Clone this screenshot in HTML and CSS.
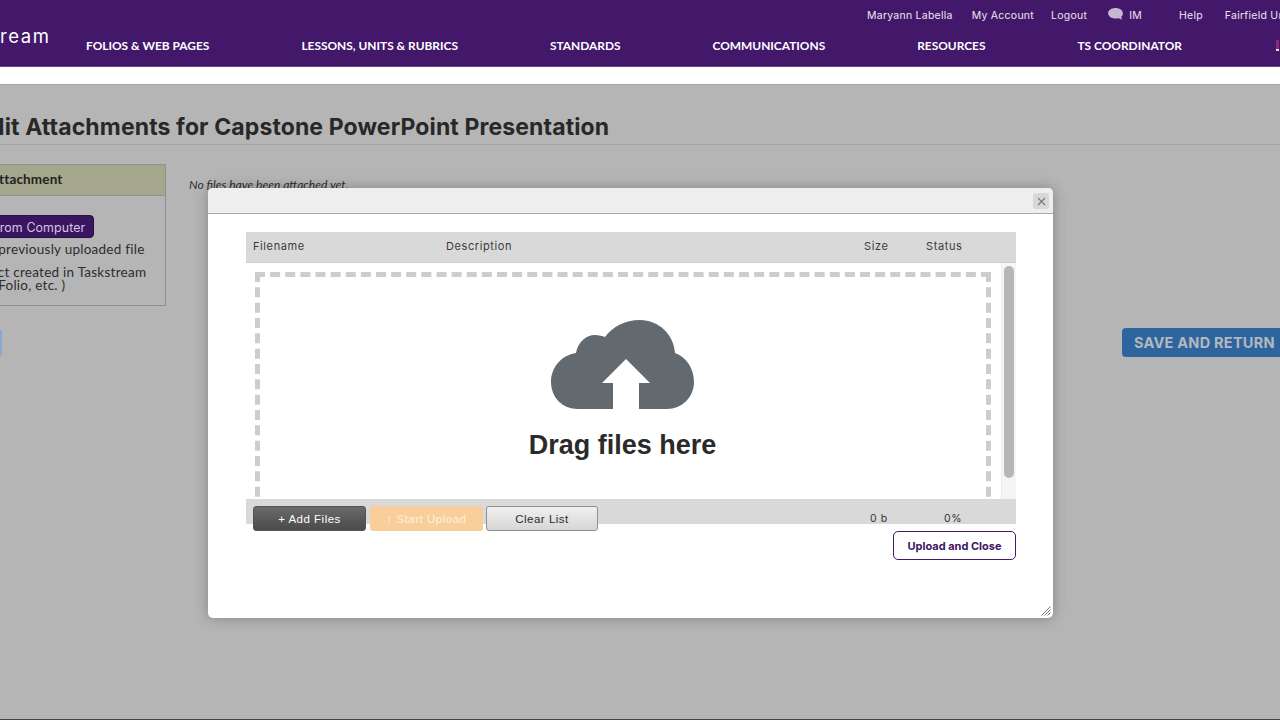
FILE: index.html
```html
<!DOCTYPE html>
<html lang="en">
<head>
<meta charset="utf-8">
<title>Edit Attachments</title>
<link rel="stylesheet" href="styles.css">
</head>
<body>
<header class="header">
  <div class="logo">ream</div>
  <div class="header-main">
    <div class="toplinks">
      <span>Maryann Labella</span>
      <span>My Account</span>
      <span class="logout">Logout</span>
      <span class="im">
        <svg class="im-icon" viewBox="0 0 16 13"><path d="M8 0C12.4 0 16 2.4 16 5.6C16 7.4 15.4 8.6 14.2 9.6L15 12.6L11.6 11C10.4 11.2 9 11.3 8 11.3C3.6 11.3 0 8.8 0 5.6C0 2.4 3.6 0 8 0Z"/></svg>
        IM
      </span>
      <span class="help">Help</span>
      <span class="school">Fairfield University</span>
    </div>
    <nav class="nav">
      <a>FOLIOS &amp; WEB PAGES</a>
      <a>LESSONS, UNITS &amp; RUBRICS</a>
      <a>STANDARDS</a>
      <a>COMMUNICATIONS</a>
      <a>RESOURCES</a>
      <a>TS COORDINATOR</a>
      <a class="nav-cut"></a>
    </nav>
  </div>
</header>
<div class="strip"></div>
<main class="page">
  <h1 class="title">Edit Attachments for Capstone PowerPoint Presentation</h1>
  <div class="columns">
    <section class="panel">
      <h2 class="panel-head">Add Attachment</h2>
      <div class="panel-body">
        <div class="pick">Upload from Computer</div>
        <p class="opt one">Select previously uploaded file</p>
        <p class="opt two"><span class="line-a">Select work product created in Taskstream</span><span class="line-b">(Web Folio, etc. )</span></p>
      </div>
    </section>
    <p class="none">No files have been attached yet.</p>
  </div>
  <div class="actions">
    <div class="sliver"></div>
    <div class="save">SAVE AND RETURN</div>
  </div>
</main>

<div class="modal">
  <div class="modal-bar"><div class="close">
    <svg viewBox="0 0 9 9" class="close-x"><path d="M1 1L8 8M8 1L1 8"/></svg>
  </div></div>
  <div class="modal-body">
    <div class="table">
      <div class="thead">
        <span class="c-name">Filename</span>
        <span class="c-desc">Description</span>
        <span class="c-size">Size</span>
        <span class="c-status">Status</span>
      </div>
      <div class="tbody">
        <div class="dropwrap">
          <div class="drop">
            <svg class="cloud" viewBox="0 0 144 90"><path fill-rule="evenodd" d="M27 89C11 89 0 77 0 62C0 47 11 35 25 33C27 22 35 15 44 15C48 15 51 16 54 17C61 7 74 0 89 0C108 0 123 15 124 33C135 37 143 48 143 62C143 77 131 89 116 89H88V63H99L75 39L51 63H62V89Z"/></svg>
            <div class="drag">Drag files here</div>
          </div>
        </div>
        <div class="scroll"><div class="thumb"></div></div>
      </div>
      <div class="tfoot">
        <div class="btn add">+ Add Files</div>
        <div class="btn start">↑ Start Upload</div>
        <div class="btn clear">Clear List</div>
        <span class="f-size">0 b</span>
        <span class="f-pct">0%</span>
      </div>
    </div>
    <div class="closerow"><div class="upload">Upload and Close</div></div>
  </div>
  <svg class="grip" viewBox="0 0 10 10"><path d="M9.5 .5L.5 9.5M9.5 3.5L3.5 9.5M9.5 6.5L6.5 9.5"/></svg>
</div>
</body>
</html>
```
FILE: styles.css
```css
* { box-sizing: border-box; }
html, body { margin: 0; height: 720px; overflow: hidden; }
body { display: flex; flex-direction: column; background: #b5b5b5; font-family: "Open Sans", sans-serif; color: #2a2a2a; }

.header { flex: none; height: 67px; background: #43176a; border-bottom: 1px solid #6b4a8a; display: flex; color: #fff; overflow: hidden; }
.logo { width: 86px; flex: none; padding-top: 26px; font: 18.5px/20px "Inter", sans-serif; letter-spacing: 1.6px; }
.header-main { flex: 1; min-width: 0; }
.toplinks { height: 37px; padding: 8px 0 0 781px; display: flex; gap: 19px; font: 10.5px/15px "Inter", sans-serif; letter-spacing: .25px; color: #ece6f1; white-space: nowrap; }
.logout { margin-left: -2px; }
.im { display: flex; align-items: center; gap: 6px; height: 15px; margin-left: 2px; }
.im-icon { width: 15px; height: 12px; fill: #c5b6d3; margin-top: -3px; }
.help { margin-left: 18px; }
.school { margin-left: 3px; }
.nav { display: flex; gap: 92px; height: 18px; font: 700 11.92px/18px "Lato", sans-serif; white-space: nowrap; }
.nav-cut { flex: none; width: 3px; height: 11px; margin: 3px 0 0 2px; background: #8a2a78; border-bottom: 2px solid #e6dce6; }

.strip { flex: none; height: 17px; background: #fff; }
.page { flex: 1; min-height: 0; border-top: 1px solid #a8a8a8; border-bottom: 1px solid #444; }
.title { margin: 0 0 0 -24px; height: 60px; padding-top: 27px; border-bottom: 1px solid #a6a6a6; font: 700 23px/30px "Inter", sans-serif; letter-spacing: .12px; color: #282828; white-space: nowrap; }
.columns { display: flex; padding-top: 19px; }
.panel { width: 210px; height: 142px; margin-left: -44px; flex: none; border: 1px solid #8f8f8f; overflow: hidden; }
.panel-head { margin: 0; height: 31px; padding-left: 5px; background: #a4a78b; border-bottom: 1px solid #8f8f8f; font: 700 13.5px/29px "Lato", sans-serif; color: #222; white-space: nowrap; letter-spacing: .15px; }
.panel-body { padding-top: 19px; font: 13.5px/13px "Lato", sans-serif; color: #2d2d2d; white-space: nowrap; }
.pick { width: 137px; height: 23px; background: #3a1560; border-radius: 4px; border: 1px solid #2a0e49; color: #d6c6e3; font: 12.4px/23px "Inter", sans-serif; letter-spacing: .1px; text-indent: -9px; overflow: hidden; }
.opt { margin: 0; letter-spacing: .25px; }
.one { margin-top: 5px; }
.two { margin-top: 10px; }
.line-a { display: block; margin-left: -71px; }
.line-b { display: block; margin-left: 5px; }
.none { margin: 14px 0 0 23px; font: italic 12.1px/14px "Lato", sans-serif; color: #2c2c2c; white-space: nowrap; }
.actions { display: flex; justify-content: space-between; margin-top: 22px; height: 29px; }
.sliver { width: 2px; height: 26px; margin-top: 2px; background: #86a9cc; border-radius: 0 3px 3px 0; }
.save { width: 170px; flex: none; margin-right: -12px; height: 29px; padding-left: 12px; background: #2f659e; border-radius: 4px 0 0 4px; color: #b3b8bf; font: 700 14.5px/29px "Inter", sans-serif; white-space: nowrap; letter-spacing: .25px; }

.modal { position: absolute; left: 208px; top: 188px; width: 845px; height: 430px; background: #fff; border-radius: 5px; box-shadow: 0 0 14px rgba(0,0,0,.28); overflow: hidden; }
.modal-bar { height: 26px; background: #eeeeee; border-bottom: 1px solid #a9a9a9; display: flex; justify-content: flex-end; padding: 5px 4px 0 0; }
.close { width: 16px; height: 16px; background: #d8d8d8; border-radius: 2px; display: flex; align-items: center; justify-content: center; }
.close-x { width: 9px; height: 9px; stroke: #777; stroke-width: 1.1; fill: none; }
.modal-body { padding: 18px 37px 0 38px; }
.table { display: flex; flex-direction: column; }
.thead { height: 31px; padding-top: 1px; background: #d9d9d9; border-bottom: 1px solid #cfcfcf; display: flex; font: 11px/27px "Inter", sans-serif; letter-spacing: .6px; color: #3b3b3b; }
.c-name { width: 200px; padding-left: 7px; }
.c-desc { width: 418px; }
.c-size { width: 62px; }
.c-status { width: 70px; }
.tbody { height: 236px; display: flex; }
.dropwrap { flex: 1; overflow: hidden; padding: 9px 10px 0 9px; }
.drop { height: 240px; border: 5px dashed #cdcdcd; display: flex; flex-direction: column; align-items: center; padding-top: 43px; }
.cloud { width: 144px; height: 90px; fill: #62696f; flex: none; }
.drag { margin: 17px 1px 0 0; font: 700 27px/36px "Liberation Sans", sans-serif; color: #2a2a2a; }
.scroll { width: 15px; flex: none; background: #f5f5f5; border-left: 1px solid #ececec; padding: 3px 2px 0 2px; }
.thumb { height: 212px; background: #b6b6b6; border-radius: 5px; }
.tfoot { height: 25px; background: #d9d9d9; position: relative; display: flex; padding-left: 7px; gap: 4px; }
.btn { width: 113px; height: 25px; margin-top: 7px; border-radius: 3px; font: 11.5px/24px "Liberation Sans", sans-serif; letter-spacing: .5px; text-align: center; }
.add { background: linear-gradient(#6a6a6a, #4b4b4b); color: #fff; border: 1px solid #555; }
.start { background: #f8cf9a; color: #fdf1df; line-height: 26px; }
.clear { width: 112px; margin-left: -1px; background: linear-gradient(#f0f0f0, #d6d6d6); border: 1px solid #8f8f8f; color: #2c2c2c; }
.f-size { position: absolute; left: 624px; top: 13px; font: 10.5px/14px "Inter", sans-serif; letter-spacing: .6px; color: #333; }
.f-pct { position: absolute; left: 698px; top: 13px; font: 10.5px/14px "Inter", sans-serif; letter-spacing: .6px; color: #333; }
.closerow { display: flex; justify-content: flex-end; margin-top: 7px; }
.upload { width: 123px; height: 29px; border: 1px solid #43176a; border-radius: 5px; font: 700 11px/28px "Inter", sans-serif; color: #3d1564; text-align: center; background: #fff; }
.grip { position: absolute; right: 2px; bottom: 2px; width: 10px; height: 10px; stroke: #777; stroke-width: 1; fill: none; }
```
